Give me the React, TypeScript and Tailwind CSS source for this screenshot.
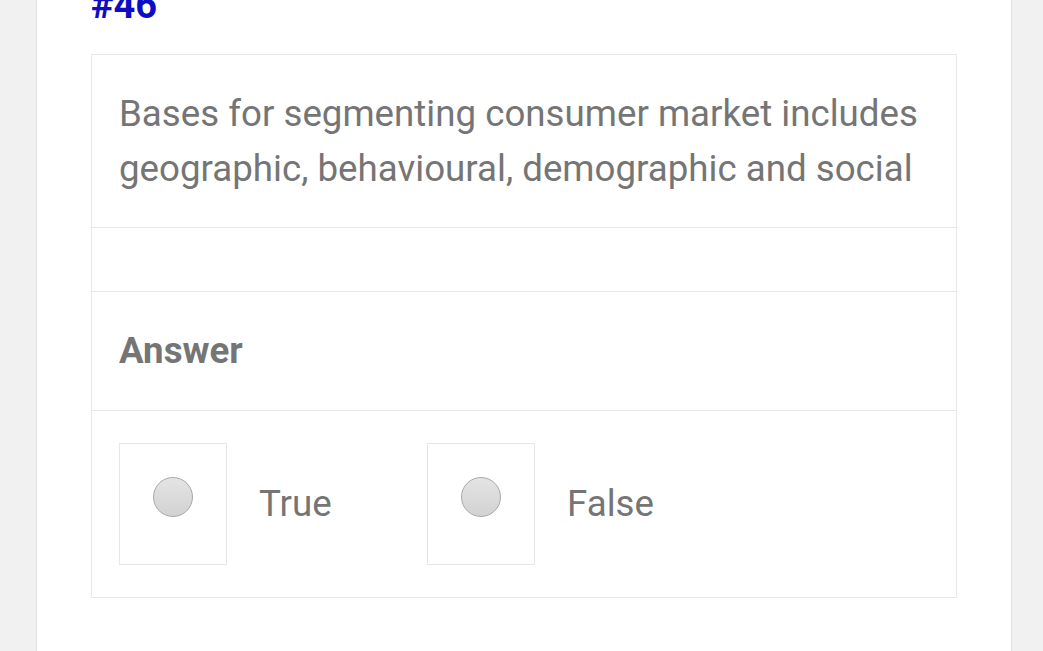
export default function App() {
  return (
    <div className="flex h-[651px] overflow-hidden bg-[#f1f1f1]" style={{ fontFamily: "Roboto, 'Noto Sans', sans-serif" }}>
      <div className="ml-[36px] w-[976px] border-x border-[#e2e2e2] bg-white pl-[54px] pr-[54px]">
        <div className="-mt-[17px] text-[38px] font-bold leading-[44px] text-[#0d0dc4]">#46</div>
        <div className="mt-[27px] border border-[#e8e8e8]">
          <div className="px-[27px] py-[31px] text-[36.7px] leading-[55px] text-[#757575]">
            Bases for segmenting consumer market includes geographic, behavioural, demographic and social
          </div>
          <div className="h-[64px] border-t border-[#e8e8e8]" />
          <div className="flex h-[119px] items-center border-t border-[#e8e8e8] px-[27px] text-[36.7px] font-bold text-[#757575]">
            Answer
          </div>
          <div className="flex items-center border-t border-[#e8e8e8] px-[27px] py-[32px]">
            <Option label="True" />
            <Option label="False" />
          </div>
        </div>
      </div>
    </div>
  );
}

function Option({ label }: { label: string }) {
  return (
    <div className="flex w-[308px] items-center">
      <div className="flex h-[122px] w-[108px] justify-center border border-[#e6e6e6] pt-[33px]">
        <div className="h-[40px] w-[40px] rounded-full border border-[#a8a8a8] bg-gradient-to-b from-[#e4e4e4] to-[#d2d2d2]" />
      </div>
      <span className="ml-[32px] text-[36.7px] text-[#757575]">{label}</span>
    </div>
  );
}
